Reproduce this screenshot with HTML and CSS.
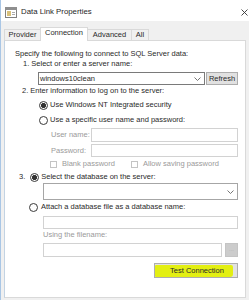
FILE: index.html
```html
<!DOCTYPE html>
<html>
<head>
<meta charset="utf-8">
<title>Data Link Properties</title>
<link rel="stylesheet" href="styles.css">
</head>
<body>
<div class="window">
  <div class="titlebar">
    <svg class="app-icon" width="12" height="11" viewBox="0 0 12 11">
      <rect x="0.5" y="0.5" width="11" height="10" fill="#fff" stroke="#808080"/>
      <rect x="0" y="0" width="12" height="3" fill="#8f8f8f"/>
      <rect x="2" y="4" width="4" height="5" fill="#d8c07a"/>
      <line x1="7" y1="5.5" x2="10" y2="5.5" stroke="#aaa"/>
      <line x1="7" y1="7.5" x2="10" y2="7.5" stroke="#aaa"/>
    </svg>
    <span class="title">Data Link Properties</span>
    <svg class="close" width="7" height="7" viewBox="0 0 7 7">
      <path d="M0.5 0.5 L6.5 6.5 M6.5 0.5 L0.5 6.5" stroke="#333" stroke-width="0.9" fill="none"/>
    </svg>
  </div>
  <div class="client">
    <div class="tabs">
      <div class="tab t-provider">Provider</div>
      <div class="tab t-connection active">Connection</div>
      <div class="tab t-advanced">Advanced</div>
      <div class="tab t-all">All</div>
    </div>
    <div class="panel">
      <div class="row r-intro">Specify the following to connect to SQL Server data:</div>
      <div class="row r-step1">1. Select or enter a server name:</div>
      <div class="row r-server">
        <div class="field enabled server-combo">
          <span class="val">windows10clean</span>
          <svg class="chev" width="7" height="4" viewBox="0 0 7 4"><polyline points="0.5,0.5 3.5,3.5 6.5,0.5" fill="none" stroke="#666" stroke-width="0.9"/></svg>
        </div>
        <div class="btn refresh">Refresh</div>
      </div>
      <div class="row r-step2">2. Enter information to log on to the server:</div>
      <div class="row r-radio1"><span class="radio on"></span><span class="lbl">Use Windows NT Integrated security</span></div>
      <div class="row r-radio2"><span class="radio"></span><span class="lbl">Use a specific user name and password:</span></div>
      <div class="row r-user"><span class="dis-label">User name:</span><div class="field disabled cred"></div></div>
      <div class="row r-pass"><span class="dis-label">Password:</span><div class="field disabled cred"></div></div>
      <div class="row r-checks">
        <span class="check-group first"><span class="check"></span><span class="dis-text">Blank password</span></span>
        <span class="check-group"><span class="check"></span><span class="dis-text">Allow saving password</span></span>
      </div>
      <div class="row r-step3"><span class="num">3.</span><span class="radio on"></span><span class="lbl">Select the database on the server:</span></div>
      <div class="row r-db">
        <div class="field combo-db">
          <svg class="chev" width="7" height="4" viewBox="0 0 7 4"><polyline points="0.5,0.5 3.5,3.5 6.5,0.5" fill="none" stroke="#666" stroke-width="0.9"/></svg>
        </div>
      </div>
      <div class="row r-attach"><span class="radio"></span><span class="lbl">Attach a database file as a database name:</span></div>
      <div class="row r-attachbox"><div class="field disabled wide"></div></div>
      <div class="row r-using"><span class="dis-text">Using the filename:</span></div>
      <div class="row r-file">
        <div class="field disabled filebox"></div>
        <div class="browse">...</div>
      </div>
      <div class="row r-test">
        <div class="btn test"><span class="marker">Test Connection</span></div>
      </div>
    </div>
  </div>
</div>
</body>
</html>
```

FILE: styles.css
```css
html, body {
  margin: 0;
  padding: 0;
}
body {
  width: 249px;
  height: 300px;
  overflow: hidden;
  background: #f0f0f0;
  font-family: "Liberation Sans", Arial, sans-serif;
  font-size: 7.5px;
  color: #2a2a2a;
}
.window {
  height: 300px;
  border-left: 1px solid #a9c6e5;
  background: #f0f0f0;
}
.titlebar {
  height: 21px;
  background: #ffffff;
  display: flex;
  align-items: flex-start;
}
.app-icon {
  margin-left: 4px;
  margin-top: 7px;
  flex: none;
}
.title {
  margin-left: 4px;
  margin-top: 7px;
  line-height: 10px;
  font-size: 7.8px;
  color: #1e1e1e;
}
.close {
  margin-left: auto;
  margin-right: 1px;
  margin-top: 9px;
  flex: none;
}
.client {
  padding: 6px 3px 0 3px;
}
.tabs {
  display: flex;
  align-items: flex-end;
  height: 13px;
}
.tab {
  box-sizing: border-box;
  height: 11px;
  border: 1px solid #d9d9d9;
  border-bottom: none;
  background: #f0f0f0;
  text-align: center;
  line-height: 10px;
  margin-right: -1px;
  white-space: nowrap;
}
.t-provider { width: 37px; }
.t-connection { width: 48px; }
.t-advanced { width: 45px; }
.t-all { width: 18px; }
.tab.active {
  height: 14px;
  background: #ffffff;
  margin-bottom: -1px;
  position: relative;
  z-index: 1;
}
.panel {
  box-sizing: border-box;
  height: 258px;
  background: #ffffff;
  border: 1px solid #d9d9d9;
  border-left-color: #c3d3e3;
  padding: 8px 7px 0 0;
}
.row {
  display: flex;
  align-items: center;
  height: 10px;
  line-height: 10px;
  white-space: nowrap;
}
.r-intro { margin-left: 10px; }
.r-step1 { margin-left: 18px; }
.r-server { margin-top: 3px; height: 13px; margin-left: 33px; }
.r-step2 { margin-top: 1px; margin-left: 17px; }
.r-radio1 { margin-top: 4px; margin-left: 34px; }
.r-radio2 { margin-top: 5px; margin-left: 34px; }
.r-user { margin-top: 3px; height: 14px; margin-left: 46px; }
.r-pass { margin-top: 2px; height: 13px; margin-left: 46px; }
.r-checks { margin-top: 2px; margin-left: 45px; }
.r-step3 { margin-top: 3px; margin-left: 14px; }
.r-db { margin-top: 1px; height: 17px; margin-left: 38px; }
.r-attach { margin-top: 2px; margin-left: 24px; }
.r-attachbox { margin-top: 4px; height: 13px; margin-left: 38px; }
.r-using { margin-top: 1px; margin-left: 38px; }
.r-file { margin-top: 3px; height: 14px; margin-left: 38px; }
.r-test { margin-top: 6px; height: 15px; margin-left: 149px; }

.field {
  box-sizing: border-box;
  height: 100%;
  background: #ffffff;
  display: flex;
  align-items: center;
}
.field.enabled { border: 1px solid #7a7a7a; }
.field.disabled { border: 1px solid #d2d2d2; }
.server-combo {
  width: 168px;
  padding-left: 1px;
}
.server-combo .val { flex: 1; }
.chev { flex: none; margin-right: 3px; }
.btn {
  box-sizing: border-box;
  height: 100%;
  background: #e1e1e1;
  border: 1px solid #adadad;
  display: flex;
  align-items: center;
  justify-content: center;
}
.refresh {
  width: 32px;
  margin-left: 1px;
}
.radio {
  box-sizing: border-box;
  width: 9px;
  height: 9px;
  border: 1px solid #3a3a3a;
  border-radius: 50%;
  background: #ffffff;
  flex: none;
}
.radio.on {
  background: radial-gradient(circle, #333 0, #333 2.2px, #ffffff 2.9px);
}
.r-radio1 .lbl, .r-radio2 .lbl { margin-left: 2px; }
.dis-label {
  width: 40px;
  color: #9a9a9a;
  flex: none;
}
.cred { width: 147px; }
.dis-text { color: #9a9a9a; }
.check-group {
  display: flex;
  align-items: center;
}
.check-group.first { width: 81px; }
.check {
  box-sizing: border-box;
  width: 7px;
  height: 7px;
  border: 1px solid #c4c4c4;
  background: #fff;
  margin-right: 5px;
  flex: none;
}
.num { margin-right: 5px; }
.r-step3 .lbl { margin-left: 2px; }
.combo-db {
  width: 195px;
  border: 1px solid #a6a6a6;
  justify-content: flex-end;
}
.combo-db .chev { margin-right: 3px; }
.r-attach .lbl { margin-left: 3px; }
.wide { width: 195px; }
.filebox { width: 179px; }
.browse {
  box-sizing: border-box;
  width: 13px;
  height: 100%;
  margin-left: 3px;
  background: #cccccc;
  border: 1px solid #c4c4c4;
  color: #b0b0b0;
  font-size: 6px;
  line-height: 10px;
  text-align: center;
}
.test {
  width: 85px;
  justify-content: flex-start;
}
.marker {
  box-sizing: border-box;
  width: 78px;
  height: 12px;
  line-height: 12px;
  padding-left: 6px;
  text-align: center;
  background: #e3ef12;
  border-radius: 1px 2px 3px 1px;
}
```
